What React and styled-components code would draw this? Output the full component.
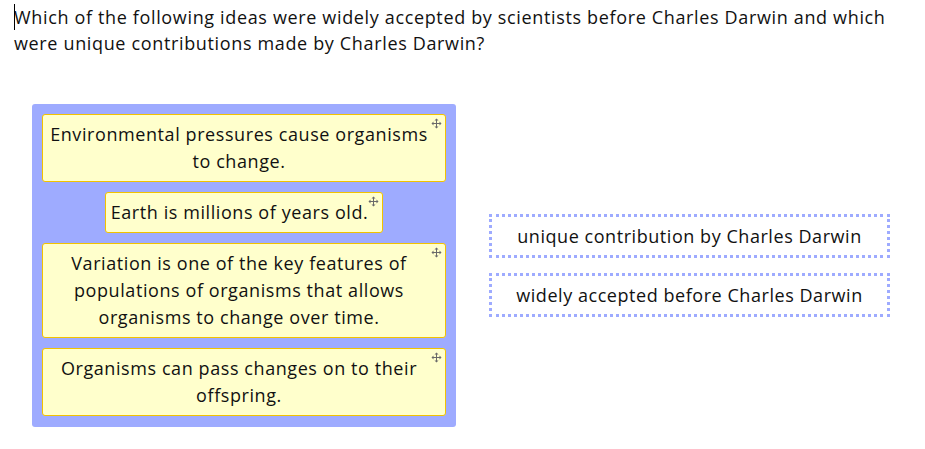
import styled, { createGlobalStyle } from "styled-components";

const GlobalStyle = createGlobalStyle`
  html, body {
    margin: 0;
    padding: 0;
    background: #ffffff;
  }
  body {
    font-family: "Open Sans", Lato, sans-serif;
    color: #111;
  }
`;

const Page = styled.div`
  padding: 4px 14px 0 14px;
`;

const Question = styled.div`
  font-size: 18px;
  line-height: 26px;
  letter-spacing: 0.65px;
  width: 890px;
  position: relative;
`;

const Caret = styled.span`
  position: absolute;
  left: 0;
  top: 0;
  width: 1px;
  height: 26px;
  background: #000;
`;

const Board = styled.div`
  display: flex;
  align-items: center;
  gap: 33px;
  margin: 48px 0 0 18px;
`;

const Pool = styled.div`
  width: 404px;
  padding: 10px 10px 11px;
  background: #9eabff;
  border-radius: 3px;
  display: flex;
  flex-direction: column;
  align-items: center;
  gap: 10px;
`;

const Card = styled.div`
  position: relative;
  box-sizing: border-box;
  width: ${p => (p.$fit ? "auto" : "100%")};
  padding: ${p => (p.$fit ? "6px 14px 6px 5px" : "6px 16px 6px 6px")};
  background: #ffffcc;
  border: 1px solid #f2c200;
  border-radius: 3px;
  font-size: 18px;
  line-height: 27px;
  letter-spacing: 0.58px;
  text-align: center;
  color: #111;
`;

const Grip = styled.svg`
  position: absolute;
  top: 3px;
  right: 3px;
  width: 11px;
  height: 11px;
`;

const Targets = styled.div`
  display: flex;
  flex-direction: column;
  gap: 15px;
`;

const Zone = styled.div`
  box-sizing: border-box;
  width: 401px;
  height: 44px;
  border: 3px dotted #9eabff;
  display: flex;
  align-items: center;
  justify-content: center;
  font-size: 18px;
  letter-spacing: 0.55px;
  color: #111;
`;

const MoveIcon = () => (
  <Grip viewBox="0 0 11 11">
    <g stroke="#6a6a6a" strokeWidth="1" fill="none">
      <path d="M5.5 1.5v8M1.5 5.5h8" />
    </g>
    <g fill="#6a6a6a">
      <path d="M5.5 0.5L3.5 2.5h4z" />
      <path d="M5.5 10.5L3.5 8.5h4z" />
      <path d="M0.5 5.5L2.5 3.5v4z" />
      <path d="M10.5 5.5L8.5 3.5v4z" />
    </g>
  </Grip>
);

const cards = [
  { text: "Environmental pressures cause organisms to change." },
  { text: "Earth is millions of years old.", fit: true },
  { text: "Variation is one of the key features of populations of organisms that allows organisms to change over time." },
  { text: "Organisms can pass changes on to their offspring." },
];

const App = () => (
  <Page>
    <GlobalStyle />
    <Question>
      <Caret />
      Which of the following ideas were widely accepted by scientists before Charles Darwin and which
      were unique contributions made by Charles Darwin?
    </Question>
    <Board>
      <Pool>
        {cards.map((c, i) => (
          <Card key={i} $fit={c.fit}>
            {c.text}
            <MoveIcon />
          </Card>
        ))}
      </Pool>
      <Targets>
        <Zone>unique contribution by Charles Darwin</Zone>
        <Zone>widely accepted before Charles Darwin</Zone>
      </Targets>
    </Board>
  </Page>
);

export default App;
